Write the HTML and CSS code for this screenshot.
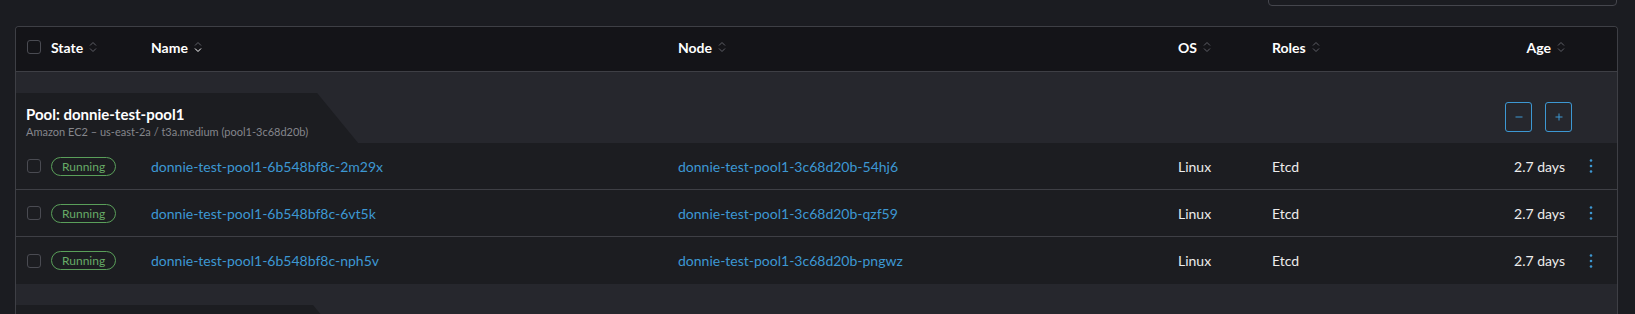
FILE: index.html
```html
<!DOCTYPE html>
<html lang="en">

<head>
    <meta charset="UTF-8" />
    <meta name="viewport" content="width=device-width, initial-scale=1.0" />
    <title>Machines</title>
    <link rel="stylesheet" href="styles.css">
</head>

<body>
    <div class="page">
        <div class="toolbar">
            <input class="search" type="search" aria-label="Filter" />
        </div>

        <div class="table">
            <div class="cols head">
                <div class="check"><span class="checkbox"></span></div>
                <div><span class="th">State
                        <svg class="sort" width="8" height="12" viewBox="0 0 8 12"><path d="M1 4.5L4 1.5L7 4.5" /><path d="M1 7.5L4 10.5L7 7.5" /></svg></span></div>
                <div><span class="th">Name
                        <svg class="sort" width="8" height="12" viewBox="0 0 8 12"><path d="M1 4.5L4 1.5L7 4.5" /><path class="on" d="M1 7.5L4 10.5L7 7.5" /></svg></span></div>
                <div><span class="th">Node
                        <svg class="sort" width="8" height="12" viewBox="0 0 8 12"><path d="M1 4.5L4 1.5L7 4.5" /><path d="M1 7.5L4 10.5L7 7.5" /></svg></span></div>
                <div><span class="th">OS
                        <svg class="sort" width="8" height="12" viewBox="0 0 8 12"><path d="M1 4.5L4 1.5L7 4.5" /><path d="M1 7.5L4 10.5L7 7.5" /></svg></span></div>
                <div><span class="th">Roles
                        <svg class="sort" width="8" height="12" viewBox="0 0 8 12"><path d="M1 4.5L4 1.5L7 4.5" /><path d="M1 7.5L4 10.5L7 7.5" /></svg></span></div>
                <div class="right"><span class="th">Age
                        <svg class="sort" width="8" height="12" viewBox="0 0 8 12"><path d="M1 4.5L4 1.5L7 4.5" /><path d="M1 7.5L4 10.5L7 7.5" /></svg></span></div>
                <div></div>
            </div>

            <div class="group">
                <div class="group-head">
                    <div class="group-tab">
                        <div class="group-title">Pool: donnie-test-pool1</div>
                        <div class="group-sub">Amazon EC2 – us-east-2a / t3a.medium (pool1-3c68d20b)</div>
                    </div>
                    <div class="group-actions">
                        <button class="btn-icon" aria-label="Scale down">
                            <svg width="8" height="8" viewBox="0 0 8 8"><path d="M0.5 4H7.5" /></svg>
                        </button>
                        <button class="btn-icon" aria-label="Scale up">
                            <svg width="8" height="8" viewBox="0 0 8 8"><path d="M0.5 4H7.5M4 0.5V7.5" /></svg>
                        </button>
                    </div>
                </div>

                <div class="cols item">
                    <div class="check"><span class="checkbox"></span></div>
                    <div><span class="badge">Running</span></div>
                    <div><a href="#">donnie-test-pool1-6b548bf8c-2m29x</a></div>
                    <div><a href="#">donnie-test-pool1-3c68d20b-54hj6</a></div>
                    <div>Linux</div>
                    <div>Etcd</div>
                    <div class="right">2.7 days</div>
                    <div class="kebab"><svg width="4" height="16" viewBox="0 0 4 16"><circle cx="2" cy="2.5" r="1.3" /><circle cx="2" cy="8" r="1.3" /><circle cx="2" cy="13.5" r="1.3" /></svg></div>
                </div>
                <div class="cols item">
                    <div class="check"><span class="checkbox"></span></div>
                    <div><span class="badge">Running</span></div>
                    <div><a href="#">donnie-test-pool1-6b548bf8c-6vt5k</a></div>
                    <div><a href="#">donnie-test-pool1-3c68d20b-qzf59</a></div>
                    <div>Linux</div>
                    <div>Etcd</div>
                    <div class="right">2.7 days</div>
                    <div class="kebab"><svg width="4" height="16" viewBox="0 0 4 16"><circle cx="2" cy="2.5" r="1.3" /><circle cx="2" cy="8" r="1.3" /><circle cx="2" cy="13.5" r="1.3" /></svg></div>
                </div>
                <div class="cols item">
                    <div class="check"><span class="checkbox"></span></div>
                    <div><span class="badge">Running</span></div>
                    <div><a href="#">donnie-test-pool1-6b548bf8c-nph5v</a></div>
                    <div><a href="#">donnie-test-pool1-3c68d20b-pngwz</a></div>
                    <div>Linux</div>
                    <div>Etcd</div>
                    <div class="right">2.7 days</div>
                    <div class="kebab"><svg width="4" height="16" viewBox="0 0 4 16"><circle cx="2" cy="2.5" r="1.3" /><circle cx="2" cy="8" r="1.3" /><circle cx="2" cy="13.5" r="1.3" /></svg></div>
                </div>
            </div>

            <!-- next pool, only its tab edge is in view -->
            <div class="group">
                <div class="group-head">
                    <div class="group-tab placeholder"></div>
                </div>
            </div>
        </div>
    </div>
</body>

</html>
```

FILE: styles.css
```css
:root {
    --body-bg: #1b1c21;
    --header-bg: #141418;
    --group-bg: #26272d;
    --row-bg: #1c1d21;
    --border: #3e3f45;
    --link: #3d98d3;
    --success: #5a9f5a;
    --text: #ececec;
    --muted: #85868c;
}

* {
    box-sizing: border-box;
}

body {
    margin: 0;
    font-family: Lato, 'Noto Sans', sans-serif;
    font-size: 14px;
    background: var(--body-bg);
    color: var(--text);
}

.page {
    padding: 0 17px 0 15px;
}

.toolbar {
    display: flex;
    justify-content: flex-end;
    margin-top: -26px;
    margin-bottom: 20px;
}

.search {
    width: 349px;
    height: 32px;
    margin-right: 1px;
    border: 1px solid #45464d;
    border-radius: 4px;
    background: transparent;
}

.table {
    border: 1px solid var(--border);
    border-bottom: none;
    border-radius: 4px 4px 0 0;
    overflow: hidden;
}

.cols {
    display: grid;
    grid-template-columns: 35px 100px 527px 500px 94px 1fr 113px 52px;
    align-items: center;
}

.head {
    height: 45px;
    padding-bottom: 4px;
    background: var(--header-bg);
    border-bottom: 1px solid var(--border);
}

.th {
    display: inline-flex;
    align-items: center;
    gap: 6px;
    font-weight: 700;
    color: #fff;
}

.sort {
    fill: none;
    stroke: #5e5f66;
    stroke-width: 1;
}

.sort .on {
    stroke: #fff;
}

.right {
    text-align: right;
}

.check {
    padding-left: 11px;
}

.checkbox {
    display: block;
    width: 14px;
    height: 14px;
    border: 1px solid #4a4b52;
    border-radius: 3px;
}

.group-head {
    display: flex;
    justify-content: space-between;
    align-items: flex-start;
    padding-top: 21px;
    background: var(--group-bg);
}

.group-tab {
    padding: 12px 50px 4px 10px;
    background: var(--row-bg);
    clip-path: polygon(0 0, calc(100% - 41px) 0, 100% 100%, 0 100%);
}

.group-tab.placeholder {
    width: 338px;
    height: 50px;
}

.group-title {
    font-size: 15px;
    font-weight: 700;
    line-height: 18px;
    color: #fff;
}

.group-sub {
    margin-top: 2px;
    font-size: 11px;
    line-height: 14px;
    color: var(--muted);
}

.group-actions {
    display: flex;
    gap: 13px;
    padding: 9px 45px 0 0;
}

.btn-icon {
    display: flex;
    align-items: center;
    justify-content: center;
    width: 27px;
    height: 30px;
    padding: 0;
    border: 1px solid var(--link);
    border-radius: 3px;
    background: transparent;
}

.btn-icon svg {
    fill: none;
    stroke: var(--link);
    stroke-width: 1;
}

.item {
    height: 47px;
    background: var(--row-bg);
    border-bottom: 1px solid var(--border);
}

.item:last-child {
    border-bottom: none;
}

.item a {
    color: var(--link);
    text-decoration: none;
}

.badge {
    display: inline-block;
    padding: 0 10px;
    height: 19px;
    line-height: 17px;
    font-size: 12px;
    color: #67ab67;
    border: 1px solid var(--success);
    border-radius: 10px;
}

.kebab {
    display: flex;
    justify-content: center;
}

.kebab svg {
    fill: var(--link);
}
```
